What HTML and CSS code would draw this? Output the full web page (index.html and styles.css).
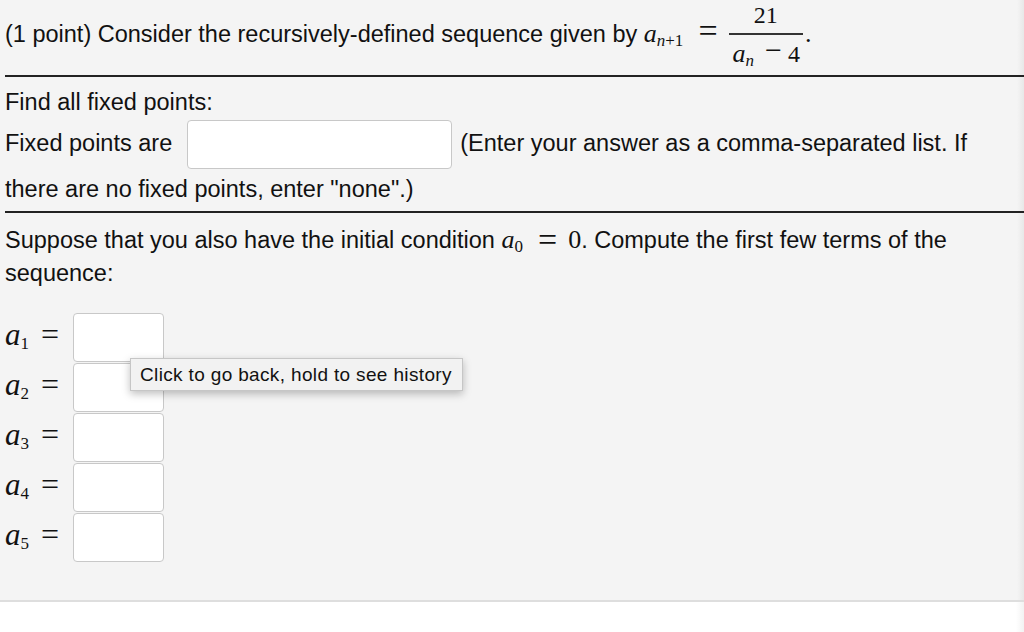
FILE: index.html
```html
<!DOCTYPE html>
<html lang="en">
<head>
    <meta charset="UTF-8">
    <meta name="viewport" content="width=device-width, initial-scale=1.0">
    <title>Recursive sequence</title>
    <link rel="stylesheet" href="styles.css">
</head>
<body>
    <div class="problem">
        <p class="intro">(1 point) Consider the recursively-defined sequence given by <span class="math"><span class="mi">a</span><span class="msub"><i>n</i>+1</span><span class="mo">=</span><span class="frac"><span class="num">21</span><span class="den"><span class="mi">a</span><span class="msub"><i>n</i></span><span class="mo minus">&minus;</span>4</span></span><span class="mn dot">.</span></span></p>
        <hr>
        <p class="find">Find all fixed points:</p>
        <p class="fixed-line">Fixed points are <input type="text" class="answer wide"> (Enter your answer as a comma-separated list. If there are no fixed points, enter "none".)</p>
        <hr class="second">
        <p class="suppose">Suppose that you also have the initial condition <span class="math"><span class="mi">a</span><span class="msub">0</span><span class="mo">=</span><span class="mn">0</span></span>. Compute the first few terms of the sequence:</p>

        <div class="terms">
            <div class="row"><span class="label math"><span class="mi">a</span><span class="msub">1</span><span class="mo">=</span></span><input type="text" class="answer small"></div>
            <div class="row"><span class="label math"><span class="mi">a</span><span class="msub">2</span><span class="mo">=</span></span><input type="text" class="answer small"></div>
            <div class="row"><span class="label math"><span class="mi">a</span><span class="msub">3</span><span class="mo">=</span></span><input type="text" class="answer small"></div>
            <div class="row"><span class="label math"><span class="mi">a</span><span class="msub">4</span><span class="mo">=</span></span><input type="text" class="answer small"></div>
            <div class="row"><span class="label math"><span class="mi">a</span><span class="msub">5</span><span class="mo">=</span></span><input type="text" class="answer small"></div>
        </div>

        <div class="tooltip">Click to go back, hold to see history</div>
    </div>
</body>
</html>
```

FILE: styles.css
```css
body {
    margin: 0;
    font-family: "Liberation Sans", Arial, sans-serif;
    font-size: 23.5px;
    color: #111;
    background: linear-gradient(to right, #fff calc(100% - 8px), #f2f2f2);
    height: 632px;
    overflow: hidden;
}
.problem {
    position: relative;
    box-sizing: border-box;
    height: 602px;
    padding: 2px 0 0 5px;
    background: linear-gradient(to right, #f4f4f4 calc(100% - 7px), #e8e8e8);
    border-bottom: 2px solid #dedede;
}
p {
    margin: 0;
    line-height: 33px;
}
hr {
    border: 0;
    border-top: 2px solid #222;
    margin: 8px 0 0;
}
.find {
    margin-top: 9px;
}
.fixed-line {
    margin-top: -3px;
}
.fixed-line .answer {
    margin: 4px 2px 4px 8px;
}
hr.second {
    margin-top: 5px;
}
.suppose {
    margin-top: 11px;
}
.suppose .mo {
    vertical-align: -3px;
}
.answer {
    box-sizing: border-box;
    height: 49px;
    margin: 0;
    padding: 0 6px;
    border: 1px solid #c8c8c8;
    border-radius: 4px;
    background: #fff;
    font: inherit;
    vertical-align: middle;
}
.wide {
    width: 265px;
}
.small {
    width: 91px;
}

/* math */
.math {
    font-family: "Liberation Serif", "Times New Roman", serif;
    line-height: 0;
    white-space: nowrap;
}
.math span {
    line-height: 0;
}
.mi, .msub i {
    font-style: italic;
}
.mi {
    font-size: 26px;
}
.mn {
    font-size: 26px;
}
.mo {
    font-size: 34px;
    margin: 0 11px 0 13px;
}
.msub {
    font-size: 17px;
    vertical-align: -4px;
    margin-right: 2px;
}
.frac {
    display: inline-flex;
    flex-direction: column;
    align-items: center;
    vertical-align: 19px;
}
.math .num, .math .den {
    font-size: 24px;
    line-height: 26px;
}
.num {
    padding: 0 3px 5px;
}
.den {
    padding: 6px 3px 0 4px;
    border-top: 2px solid #333;
}
.den .minus {
    font-size: 30px;
    margin: 0 6px 0 9px;
    vertical-align: 2px;
}
.dot {
    margin-left: 2px;
}

/* answer rows */
.terms {
    margin-top: 20px;
}
.row {
    height: 50px;
    font-size: 29px;
    line-height: 50px;
}
.label {
    display: inline-block;
    width: 68px;
}
.label .mi {
    font-size: 31px;
}
.label .msub {
    margin-right: 3px;
}
.label .mo {
    font-size: 32px;
    margin: 0 0 0 9px;
}

.tooltip {
    position: absolute;
    left: 130px;
    top: 358px;
    width: 313px;
    height: 31px;
    padding: 0 9px;
    line-height: 31px;
    font-size: 19px;
    letter-spacing: 0.35px;
    white-space: nowrap;
    color: #111;
    background: #f2f2f2;
    border: 1px solid #c6c6c6;
    box-shadow: 0 3px 8px rgba(0, 0, 0, 0.25);
}
```
